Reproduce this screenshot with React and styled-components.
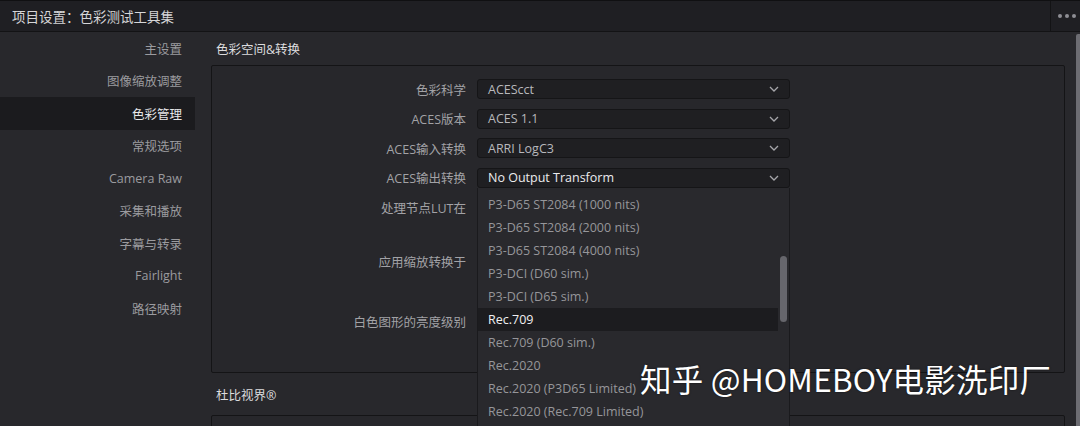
import React from "react";
import styled, { createGlobalStyle } from "styled-components";

const GlobalStyle = createGlobalStyle`
  html, body { margin: 0; padding: 0; background: #28282c; }
  body {
    font-family: "Open Sans", "Noto Sans CJK SC", sans-serif;
    -webkit-font-smoothing: antialiased;
  }
  * { box-sizing: border-box; }
`;

const Page = styled.div`
  position: relative;
  width: 1080px;
  height: 426px;
  overflow: hidden;
  display: flex;
  flex-direction: column;
  background: #28282c;
`;

const TitleBar = styled.div`
  height: 32px;
  flex: none;
  display: flex;
  align-items: stretch;
  background: #1f1f23;
  border-top: 1px solid #101012;
  border-bottom: 1px solid #131315;
`;

const Title = styled.div`
  flex: 1;
  display: flex;
  align-items: center;
  padding-left: 12px;
  font-size: 13.5px;
  color: #d6d6d8;
  font-family: "Noto Sans CJK SC", sans-serif;
`;

const More = styled.div`
  width: 30px;
  border-left: 1px solid #131315;
  display: flex;
  align-items: center;
  justify-content: center;
  gap: 3px;
  padding-left: 2px;
`;

const Dot = styled.span`
  width: 4px;
  height: 4px;
  border-radius: 50%;
  background: #8e8e94;
`;

const Body = styled.div`
  flex: 1;
  display: flex;
  min-height: 0;
`;

const Sidebar = styled.div`
  width: 195px;
  flex: none;
  display: flex;
  flex-direction: column;
`;

const NavItem = styled.div`
  height: 32.5px;
  display: flex;
  align-items: center;
  justify-content: flex-end;
  padding-right: 13px;
  font-size: 12.5px;
  color: ${(p) => (p.$active ? "#e6e6e8" : "#9b9b9f")};
  background: ${(p) => (p.$active ? "#1b1b1e" : "transparent")};
`;

const Main = styled.div`
  flex: 1;
  padding-left: 16px;
  padding-right: 7px;
  display: flex;
  flex-direction: column;
`;

const SectionHead = styled.div`
  height: ${(p) => p.$h || 33}px;
  display: flex;
  align-items: center;
  padding-left: 5px;
  font-size: 12.5px;
  color: #dcdcde;
  flex: none;
`;

const Box = styled.div`
  flex: none;
  height: ${(p) => p.$h}px;
  background: #27272b;
  border: 1px solid #141416;
  border-radius: 2px;
  padding-top: 13px;
  display: flex;
  flex-direction: column;
`;

const Row = styled.div`
  height: ${(p) => p.$h || 20}px;
  margin-bottom: ${(p) => p.$mb ?? 9.5}px;
  display: grid;
  grid-template-columns: 254px 313px;
  column-gap: 11px;
  align-items: ${(p) => p.$align || "center"};
`;

const Label = styled.div`
  text-align: right;
  font-size: 12.5px;
  color: #a2a2a6;
  white-space: nowrap;
`;

const SelectWrap = styled.div`
  position: relative;
  height: 20px;
`;

const Select = styled.div`
  height: 20px;
  display: flex;
  align-items: center;
  justify-content: space-between;
  padding: 0 10px 0 10px;
  background: #1f1f22;
  border: 1px solid #151517;
  border-radius: 3px;
  font-size: 12.5px;
  color: ${(p) => (p.$open ? "#ececee" : "#b8b8bc")};
`;

const Menu = styled.div`
  position: absolute;
  left: 0;
  top: 20px;
  width: 313px;
  height: 260px;
  background: #29292d;
  border-left: 1px solid #1a1a1d;
  border-right: 1px solid #1a1a1d;
  padding-top: 5px;
  z-index: 5;
`;

const MenuItem = styled.div`
  width: 300px;
  height: 23px;
  display: flex;
  align-items: center;
  padding-left: 10px;
  font-size: 12.5px;
  color: ${(p) => (p.$sel ? "#f0f0f2" : "#96969a")};
  background: ${(p) => (p.$sel ? "#1c1c1f" : "transparent")};
`;

const Thumb = styled.div`
  position: absolute;
  left: 302px;
  top: 68px;
  width: 7px;
  height: 66px;
  border-radius: 3.5px;
  background: #66666c;
`;

const ScrollTrack = styled.div`
  width: 8px;
  flex: none;
  display: flex;
  justify-content: flex-end;
  padding-top: 2px;
`;

const ScrollBar = styled.div`
  width: 4px;
  height: 100%;
  background: #6c6c72;
  border-radius: 2px 0 0 0;
`;

const Watermark = styled.div`
  position: absolute;
  left: 640px;
  top: 360px;
  font-family: "Noto Sans CJK SC", sans-serif;
  font-size: 31.5px;
  line-height: 36px;
  color: #ffffff;
  white-space: nowrap;
  text-shadow: 0 0 2px rgba(0, 0, 0, 0.6);
  z-index: 10;
  letter-spacing: 0.2px;
`;

const Chevron = () => (
  <svg width="10" height="6" viewBox="0 0 10 6">
    <polyline points="1,1 5,5 9,1" fill="none" stroke="#a6a6aa" strokeWidth="1.3" />
  </svg>
);

const nav = ["主设置", "图像缩放调整", "色彩管理", "常规选项", "Camera Raw", "采集和播放", "字幕与转录", "Fairlight", "路径映射"];

const items = [
  "P3-D65 ST2084 (1000 nits)",
  "P3-D65 ST2084 (2000 nits)",
  "P3-D65 ST2084 (4000 nits)",
  "P3-DCI (D60 sim.)",
  "P3-DCI (D65 sim.)",
  "Rec.709",
  "Rec.709 (D60 sim.)",
  "Rec.2020",
  "Rec.2020 (P3D65 Limited)",
  "Rec.2020 (Rec.709 Limited)",
];

export default function App() {
  return (
    <>
      <GlobalStyle />
      <Page>
        <TitleBar>
          <Title>项目设置：色彩测试工具集</Title>
          <More>
            <Dot />
            <Dot />
            <Dot />
          </More>
        </TitleBar>
        <Body>
          <Sidebar>
            {nav.map((n) => (
              <NavItem key={n} $active={n === "色彩管理"}>
                {n}
              </NavItem>
            ))}
          </Sidebar>
          <Main>
            <SectionHead>色彩空间&amp;转换</SectionHead>
            <Box $h={308}>
              <Row>
                <Label>色彩科学</Label>
                <SelectWrap>
                  <Select>
                    ACEScct
                    <Chevron />
                  </Select>
                </SelectWrap>
              </Row>
              <Row>
                <Label>ACES版本</Label>
                <SelectWrap>
                  <Select>
                    ACES 1.1
                    <Chevron />
                  </Select>
                </SelectWrap>
              </Row>
              <Row>
                <Label>ACES输入转换</Label>
                <SelectWrap>
                  <Select>
                    ARRI LogC3
                    <Chevron />
                  </Select>
                </SelectWrap>
              </Row>
              <Row>
                <Label>ACES输出转换</Label>
                <SelectWrap>
                  <Select $open>
                    No Output Transform
                    <Chevron />
                  </Select>
                  <Menu>
                    {items.map((it) => (
                      <MenuItem key={it} $sel={it === "Rec.709"}>
                        {it}
                      </MenuItem>
                    ))}
                    <Thumb />
                  </Menu>
                </SelectWrap>
              </Row>
              <Row $mb={34}>
                <Label>处理节点LUT在</Label>
                <div />
              </Row>
              <Row $mb={40}>
                <Label>应用缩放转换于</Label>
                <div />
              </Row>
              <Row>
                <Label>白色图形的亮度级别</Label>
                <div />
              </Row>
            </Box>
            <SectionHead $h={42}>杜比视界®</SectionHead>
            <Box $h={60} />
          </Main>
          <ScrollTrack>
            <ScrollBar />
          </ScrollTrack>
        </Body>
        <Watermark>知乎 @HOMEBOY电影洗印厂</Watermark>
      </Page>
    </>
  );
}
